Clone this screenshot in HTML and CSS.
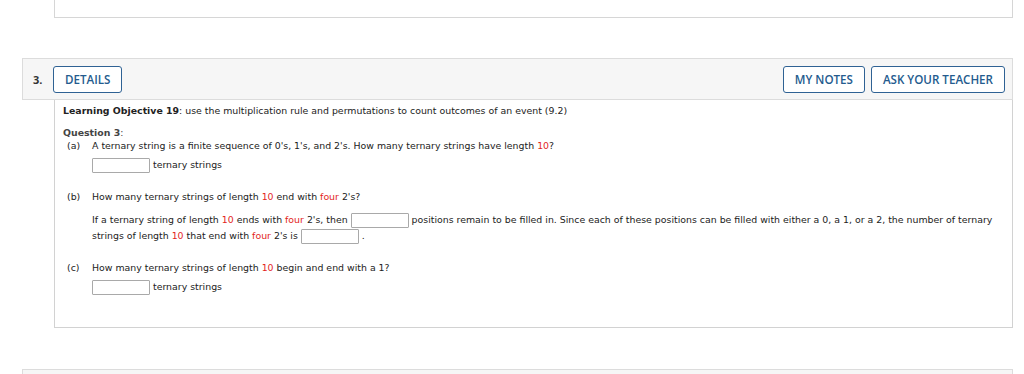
FILE: index.html
```html
<!DOCTYPE html>
<html lang="en">
<head>
  <meta charset="UTF-8" />
  <title>Question 3</title>
  <link rel="stylesheet" href="styles.css">
</head>
<body>
  <div class="page">
    <div class="prev-body"></div>

    <div class="question">
      <div class="q-head">
        <span class="q-num">3.</span>
        <button class="btn">DETAILS</button>
        <div class="q-actions">
          <button class="btn">MY NOTES</button>
          <button class="btn">ASK YOUR TEACHER</button>
        </div>
      </div>

      <div class="q-body">
        <p class="objective"><b>Learning Objective 19</b>: use the multiplication rule and permutations to count outcomes of an event (9.2)</p>
        <p class="q-label"><b>Question 3</b>:</p>

        <div class="part">
          <span class="part-tag">(a)</span>
          <div class="part-main">
            <p class="prompt">A ternary string is a finite sequence of 0's, 1's, and 2's. How many ternary strings have length <span class="red">10</span>?</p>
            <p class="answer"><input type="text" class="blank"> ternary strings</p>
          </div>
        </div>

        <div class="part part-b">
          <span class="part-tag">(b)</span>
          <div class="part-main">
            <p class="prompt">How many ternary strings of length <span class="red">10</span> end with <span class="red">four</span> 2's?</p>
            <p class="work">If a ternary string of length <span class="red">10</span> ends with <span class="red">four</span> 2's, then <input type="text" class="blank"> positions remain to be filled in. Since each of these positions can be filled with either a 0, a 1, or a 2, the number of ternary strings of length <span class="red">10</span> that end with <span class="red">four</span> 2's is <input type="text" class="blank"> .</p>
          </div>
        </div>

        <div class="part part-c">
          <span class="part-tag">(c)</span>
          <div class="part-main">
            <p class="prompt">How many ternary strings of length <span class="red">10</span> begin and end with a 1?</p>
            <p class="answer"><input type="text" class="blank"> ternary strings</p>
          </div>
        </div>
      </div>
    </div>

    <div class="question next">
      <div class="q-head"></div>
    </div>
  </div>
</body>
</html>
```

FILE: styles.css
```css
body {
  margin: 0;
  background: #fff;
  font-family: 'DejaVu Sans', Verdana, sans-serif;
  font-size: 9.4px;
  color: #222;
}

p {
  margin: 0;
}

.page {
  margin-left: 22px;
  width: 991px;
}

.prev-body {
  height: 17px;
  margin-left: 32px;
  border: 1px solid #d6d6d6;
  border-top: none;
}

.question {
  margin-top: 40px;
}

.question.next {
  margin-top: 41px;
}

.q-head {
  height: 40px;
  display: flex;
  align-items: center;
  background: #f6f6f6;
  border: 1px solid #dcdcdc;
}

.q-num {
  width: 30px;
  padding-left: 10px;
  box-sizing: border-box;
  font-family: 'Open Sans', sans-serif;
  font-weight: 700;
  font-size: 11px;
  color: #333;
}

.btn {
  height: 27px;
  padding: 0 11px;
  background: #fff;
  border: 1px solid #2f6294;
  border-radius: 3px;
  font-family: 'Open Sans', sans-serif;
  font-weight: 600;
  font-size: 11.6px;
  color: #245b8e;
  cursor: pointer;
}

.q-actions {
  margin-left: auto;
  margin-right: 7px;
  display: flex;
  gap: 6px;
}

.q-body {
  margin-left: 32px;
  height: 227px;
  border: 1px solid #d2d2d2;
  border-top: none;
  padding: 0 8px;
}

.objective {
  padding-top: 5px;
  line-height: 12px;
}

.q-label {
  margin-top: 10px;
  line-height: 12px;
  color: #444;
}

.part {
  display: flex;
  margin-left: 4px;
}

.part-tag {
  width: 25px;
  flex-shrink: 0;
  line-height: 14px;
}

.part-main {
  flex: 1;
}

.prompt {
  line-height: 14px;
}

.answer {
  margin-top: 4px;
  line-height: 16px;
}

.part-b {
  margin-top: 17px;
}

.work {
  margin-top: 8px;
  line-height: 16px;
}

.part-c {
  margin-top: 17px;
}

.red {
  color: #e3261c;
}

.blank {
  width: 58px;
  height: 15px;
  box-sizing: border-box;
  margin: 0;
  padding: 0 2px;
  border: 1px solid #a9a9a9;
  border-radius: 1px;
  background: #fff;
  vertical-align: middle;
  font-size: 9px;
}
```
